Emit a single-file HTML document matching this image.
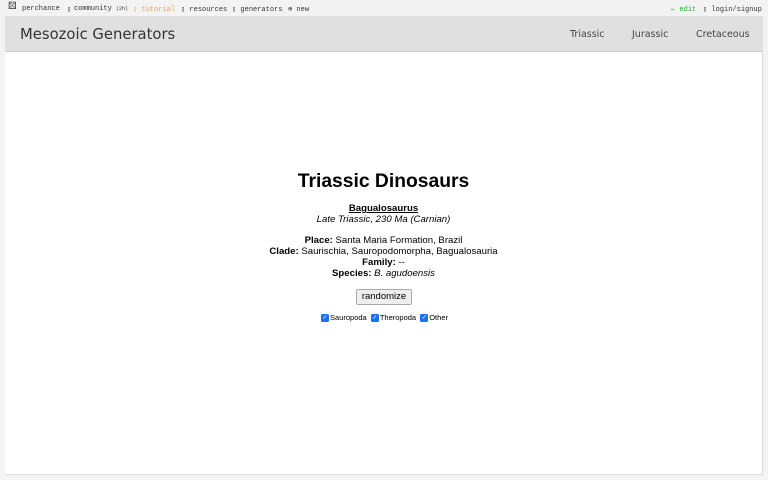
<!DOCTYPE html>
<html><head><meta charset="utf-8">
<style>
html,body{margin:0;padding:0;width:768px;height:480px;overflow:hidden;background:#f3f3f3;font-family:"Liberation Sans",sans-serif;}
#top{position:absolute;left:0;top:0;width:768px;height:16px;font-family:"Liberation Mono",monospace;font-size:7px;color:#333;}
#top span{position:absolute;top:5px;white-space:nowrap}
#hdr{position:absolute;left:5px;top:16px;width:758px;height:35px;background:#e0e0e0;border-bottom:1px solid #ccc;}
#hdr .t{position:absolute;left:15px;top:10px;font-family:"DejaVu Sans",sans-serif;font-size:14.8px;color:#333;}
#hdr .n{position:absolute;top:12px;font-family:"DejaVu Sans",sans-serif;font-size:9.5px;color:#444;}
#main{position:absolute;left:5px;top:52px;width:757px;height:422px;background:#fff;border-right:1px solid #ddd;border-bottom:1px solid #ddd;text-align:center;color:#000;}
h1{position:absolute;left:0;width:100%;top:119px;margin:0;font-size:19.3px;font-weight:bold;}
.info{position:absolute;left:0;width:100%;top:152px;font-size:9.6px;line-height:10.8px;}
.btn{position:absolute;left:351px;top:237px;width:54px;height:14px;border:1px solid #aaa;border-radius:2px;background:#eee;font-size:9.5px;line-height:14px;}
.cb{position:absolute;left:0;width:100%;top:261px;font-size:7.5px;line-height:10px;}
.box{display:inline-block;width:8px;height:8px;background:#1a73e8;border-radius:1.5px;color:#fff;font-size:6px;line-height:8px;vertical-align:middle;margin:0 1px 0 2px;}
</style></head><body>
<div id="top">
<span style="left:8px;font-size:10px;top:1px;font-family:'DejaVu Sans'">⚄</span>
<span style="left:22px">perchance</span>
<span style="left:67px">▯</span>
<span style="left:74px">community <small style="font-size:5px">(2h)</small></span>
<span style="left:133px;color:#e8a060">▯ tutorial</span>
<span style="left:181px">▯ resources</span>
<span style="left:232px">▯ generators</span>
<span style="left:288px">⊕ new</span>
<span style="left:671px;color:#3a3">✏ edit</span>
<span style="left:703px">▯ login/signup</span>
</div>
<div id="hdr">
<div class="t">Mesozoic Generators</div>
<div class="n" style="left:565px;top:13px">Triassic</div>
<div class="n" style="left:627px;top:13px">Jurassic</div>
<div class="n" style="left:691px;top:13px">Cretaceous</div>
</div>
<div id="main">
<h1>Triassic Dinosaurs</h1>
<div class="info">
<b><u>Bagualosaurus</u></b><br>
<i>Late Triassic, 230 Ma (Carnian)</i><br><br>
<b>Place:</b> Santa Maria Formation, Brazil<br>
<b>Clade:</b> Saurischia, Sauropodomorpha, Bagualosauria<br>
<b>Family:</b> --<br>
<b>Species:</b> <i>B. agudoensis</i>
</div>
<div class="btn">randomize</div>
<div class="cb"><span class="box">✓</span>Sauropoda <span class="box">✓</span>Theropoda <span class="box">✓</span>Other</div>
</div>
</body></html>
